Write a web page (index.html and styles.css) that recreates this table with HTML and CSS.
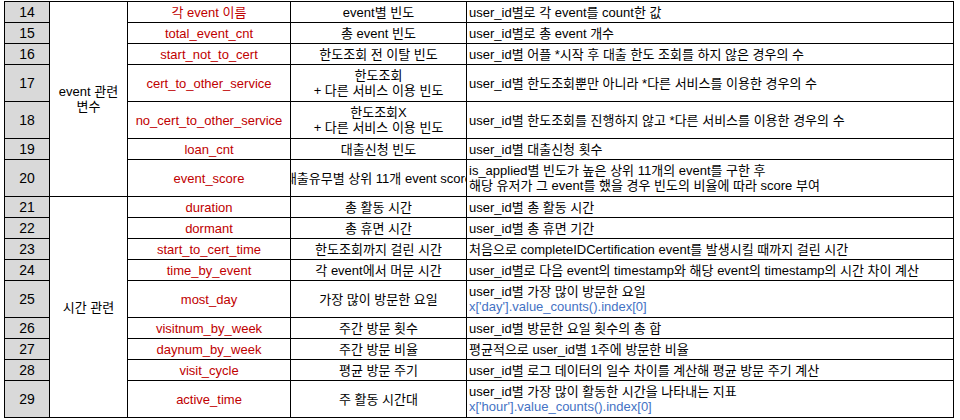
FILE: index.html
```html
<!DOCTYPE html>
<html lang="ko">
<head>
<meta charset="utf-8">
<link rel="stylesheet" href="styles.css">
</head>
<body>
<table class="sheet">
  <colgroup>
    <col class="c-num"><col class="c-grp"><col class="c-var"><col class="c-name"><col class="c-desc">
  </colgroup>
  <tbody>
    <tr class="s"><td class="num">14</td><td class="grp" rowspan="7">event 관련<br>변수</td><td class="var">각 event 이름</td><td class="name">event별 빈도</td><td class="desc">user_id별로 각 event를 count한 값</td></tr>
    <tr class="s"><td class="num">15</td><td class="var">total_event_cnt</td><td class="name">총 event 빈도</td><td class="desc">user_id별로 총 event 개수</td></tr>
    <tr class="s"><td class="num">16</td><td class="var">start_not_to_cert</td><td class="name">한도조회 전 이탈 빈도</td><td class="desc">user_id별 어플 *시작 후 대출 한도 조회를 하지 않은 경우의 수</td></tr>
    <tr class="d"><td class="num">17</td><td class="var">cert_to_other_service</td><td class="name">한도조회<br>+ 다른 서비스 이용 빈도</td><td class="desc">user_id별 한도조회뿐만 아니라 *다른 서비스를 이용한 경우의 수</td></tr>
    <tr class="d"><td class="num">18</td><td class="var">no_cert_to_other_service</td><td class="name">한도조회X<br>+ 다른 서비스 이용 빈도</td><td class="desc">user_id별 한도조회를 진행하지 않고 *다른 서비스를 이용한 경우의 수</td></tr>
    <tr class="s"><td class="num">19</td><td class="var">loan_cnt</td><td class="name">대출신청 빈도</td><td class="desc">user_id별 대출신청 횟수</td></tr>
    <tr class="d"><td class="num">20</td><td class="var">event_score</td><td class="name"><div class="clip"><span>대출유무별 상위 11개 event score</span></div></td><td class="desc">is_applied별 빈도가 높은 상위 11개의 event를 구한 후<br>해당 유저가 그 event를 했을 경우 빈도의 비율에 따라 score 부여</td></tr>
    <tr class="s"><td class="num">21</td><td class="grp" rowspan="9">시간 관련</td><td class="var">duration</td><td class="name">총 활동 시간</td><td class="desc">user_id별 총 활동 시간</td></tr>
    <tr class="s"><td class="num">22</td><td class="var">dormant</td><td class="name">총 휴면 시간</td><td class="desc">user_id별 총 휴면 기간</td></tr>
    <tr class="s"><td class="num">23</td><td class="var">start_to_cert_time</td><td class="name">한도조회까지 걸린 시간</td><td class="desc">처음으로 completeIDCertification event를 발생시킬 때까지 걸린 시간</td></tr>
    <tr class="s"><td class="num">24</td><td class="var">time_by_event</td><td class="name">각 event에서 머문 시간</td><td class="desc">user_id별로 다음 event의 timestamp와 해당 event의 timestamp의 시간 차이 계산</td></tr>
    <tr class="d"><td class="num">25</td><td class="var">most_day</td><td class="name">가장 많이 방문한 요일</td><td class="desc">user_id별 가장 많이 방문한 요일<br><span class="code">x['day'].value_counts().index[0]</span></td></tr>
    <tr class="s"><td class="num">26</td><td class="var">visitnum_by_week</td><td class="name">주간 방문 횟수</td><td class="desc">user_id별 방문한 요일 횟수의 총 합</td></tr>
    <tr class="s"><td class="num">27</td><td class="var">daynum_by_week</td><td class="name">주간 방문 비율</td><td class="desc">평균적으로 user_id별 1주에 방문한 비율</td></tr>
    <tr class="s"><td class="num">28</td><td class="var">visit_cycle</td><td class="name">평균 방문 주기</td><td class="desc">user_id별 로그 데이터의 일수 차이를 계산해 평균 방문 주기 계산</td></tr>
    <tr class="d"><td class="num">29</td><td class="var">active_time</td><td class="name">주 활동 시간대</td><td class="desc">user_id별 가장 많이 활동한 시간을 나타내는 지표<br><span class="code">x['hour'].value_counts().index[0]</span></td></tr>
  </tbody>
</table>
</body>
</html>
```

FILE: styles.css
```css
html, body {
  margin: 0;
  background: #ffffff;
}
body {
  padding: 1px 0 0 4px;
  font-family: "Liberation Sans", "Noto Sans CJK KR", sans-serif;
  font-size: 13px;
  color: #000000;
}
.sheet {
  border-collapse: collapse;
  table-layout: fixed;
  width: 950px;
}
.c-num { width: 45px; }
.c-grp { width: 78px; }
.c-var { width: 163px; }
.c-name { width: 176px; }
.c-desc { width: 487px; }

.sheet td {
  border: 1px solid #000000;
  padding: 0 2px;
  line-height: 15px;
  vertical-align: middle;
  text-align: center;
  white-space: nowrap;
  overflow: hidden;
}
.sheet tr.s td { height: 20px; }
.sheet tr.d td { height: 36px; }

.sheet td.num {
  background: #d9d9d9;
  font-size: 14px;
}
.sheet td.grp {
  white-space: normal;
}
.sheet td.var {
  color: #c00000;
}
.sheet td.name {
  padding: 0;
}
.sheet td.desc {
  text-align: left;
  padding-left: 2px;
}
.code {
  color: #4472c4;
}
.clip {
  display: flex;
  justify-content: center;
  overflow: hidden;
  white-space: nowrap;
}
.clip span {
  flex: none;
}
```
